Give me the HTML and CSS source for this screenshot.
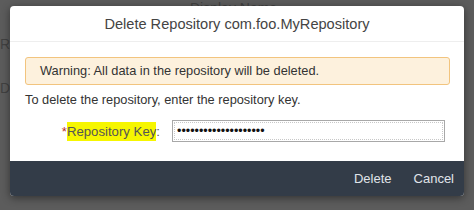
FILE: index.html
```html
<!doctype html>
<html>
<head>
<meta charset="utf-8">
<title>Delete Repository</title>
<link rel="stylesheet" href="styles.css">
</head>
<body>
  <div class="page">
    <div class="page-row top">Display Name</div>
    <div class="page-row side">Re</div>
    <div class="page-row side">Do</div>
  </div>

  <div class="backdrop"></div>

  <div class="dialog">
    <div class="dialog-header">Delete Repository com.foo.MyRepository</div>
    <div class="dialog-body">
      <div class="warning">Warning: All data in the repository will be deleted.</div>
      <p class="hint">To delete the repository, enter the repository key.</p>
      <div class="field">
        <label class="field-label" for="repoKey"><span class="req">*</span><span class="mark">Repository Key</span>:</label>
        <input id="repoKey" class="field-input" type="password" value="aaaaaaaaaaaaaaaaaaaa">
      </div>
    </div>
    <div class="dialog-footer">
      <button class="btn">Delete</button>
      <button class="btn">Cancel</button>
    </div>
  </div>
</body>
</html>
```
FILE: styles.css
```css
html, body { width:100%; height:100%; margin:0; padding:0; }

body {
  font-family: "Liberation Sans", Arial, sans-serif;
  font-size: 13px;
  color: #333;
  background: #fff;
  overflow: hidden;
}

/* page behind the modal */
.page-row {
  color: #222;
  font-size: 14px;
}
.page-row.top {
  padding-left: 190px;
  height: 32px;
}
.page-row.side {
  height: 40px;
  padding-top: 4px;
}

.backdrop {
  position: absolute;
  top:0; left:0; right:0; bottom:0;
  background: rgba(70,70,70,.88);
}

.dialog {
  position: absolute;
  left: 10px;
  top: 6px;
  width: 454px;
  background: #fff;
  border-radius: 4px;
  box-shadow: 0 2px 8px rgba(0,0,0,.45);
  overflow: hidden;
}

.dialog-header {
  height: 35px;
  line-height: 37px;
  text-align: center;
  font-size: 14.6px;
  color: #444;
  border-bottom: 1px solid #eeeeee;
}

.dialog-body {
  padding: 15px 14px 19px 15px;
}

.warning {
  height: 26px;
  line-height: 26px;
  padding-left: 14px;
  background: #fdf1dd;
  border: 1px solid #f2c47e;
  border-radius: 3px;
  color: #333;
  font-size: 12.8px;
}

.hint {
  margin: 7px 0 0 0;
  line-height: 16px;
  font-size: 12.8px;
}

.field {
  display: flex;
  align-items: center;
  margin-top: 12px;
}

.field-label {
  width: 135px;
  text-align: right;
  color: #555;
  font-size: 13.2px;
}
.req { color: #b8322a; }
.mark {
  background: #f6f600;
  color: #555;
  padding: 2px 0;
}

.field-input {
  margin-left: 12px;
  width: 273px;
  height: 22px;
  box-sizing: border-box;
  border: 1px solid #a8a8a8;
  outline: 1px dotted #c8c8c8;
  outline-offset: -3px;
  padding: 0 4px;
  font-family: "Liberation Sans", Arial, sans-serif;
  font-size: 12.5px;
  color: #111;
  background: #fff;
}

.dialog-footer {
  display: flex;
  justify-content: flex-end;
  align-items: center;
  height: 35px;
  padding-right: 2px;
  background: #333c48;
}

.btn {
  background: none;
  border: none;
  color: #e0e4ea;
  font-family: "Liberation Sans", Arial, sans-serif;
  font-size: 13px;
  padding: 0 8px;
  margin-left: 6px;
  cursor: pointer;
}
```
